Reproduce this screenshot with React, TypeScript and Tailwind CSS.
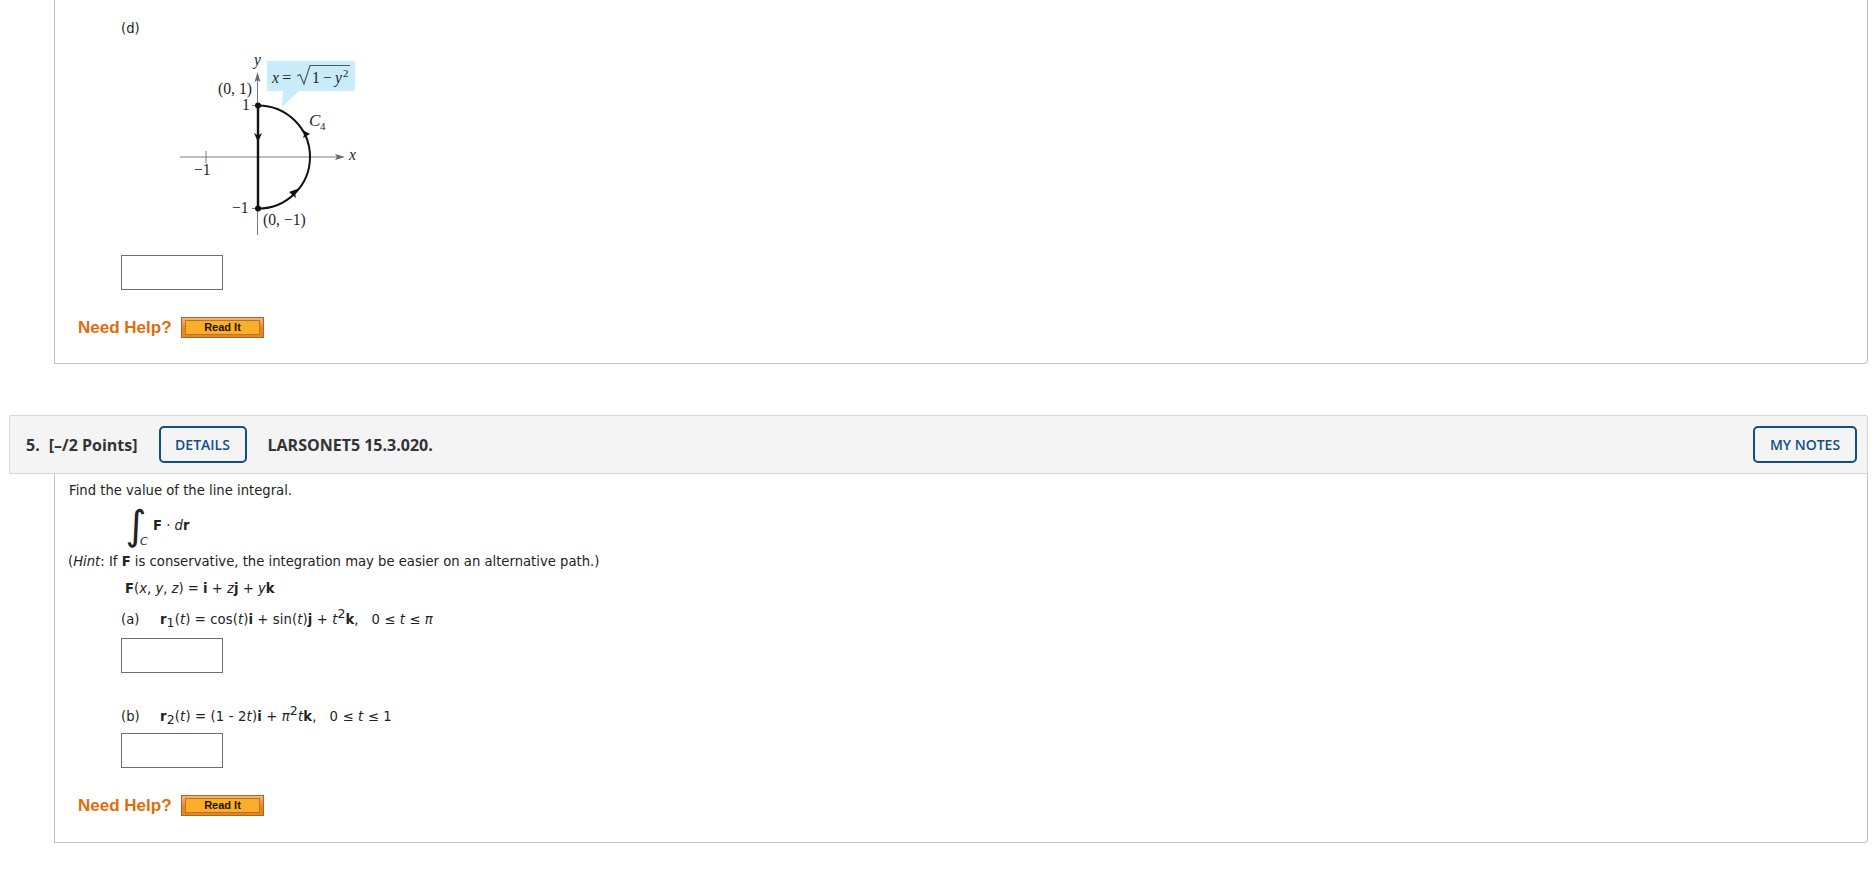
import React from "react";

const V = "font-['DejaVu_Sans','Verdana',sans-serif]";

function Box() {
  return <div className="w-[102px] h-[35px] border border-[#6e6e6e] bg-white" />;
}

function NeedHelp({ className = "" }: { className?: string }) {
  return (
    <div className={`flex items-center ${className}`}>
      <span className="font-['Liberation_Sans',sans-serif] font-bold text-[17px] leading-[21px] text-[#e36c09] w-[103px]">Need Help?</span>
      <div className="w-[83px] h-[21px] border border-[#a9652b] bg-gradient-to-b from-[#f8b678] via-[#f0851b] to-[#ee8318] p-[2px] pl-[3px] pr-[3px]">
        <div className="h-full border border-[#b5752e] bg-[#fbae2b] flex items-center justify-center font-['Liberation_Sans',sans-serif] font-bold text-[11px] text-[#1a1208]">Read It</div>
      </div>
    </div>
  );
}

function Graph() {
  return (
    <svg width="190" height="190" viewBox="175 50 190 190" className="block">
      <rect x="267" y="61" width="88" height="30" fill="#c9ecfb" />
      <polygon points="283,91 299,91 282,107" fill="#c9ecfb" />
      <line x1="180" y1="157" x2="340" y2="157" stroke="#7a7a7a" strokeWidth="1" />
      <polygon points="335,154 345,157 335,160 337,157" fill="#6a6a6a" />
      <line x1="257.5" y1="78" x2="257.5" y2="235" stroke="#7a7a7a" strokeWidth="1" />
      <polygon points="254.5,82 257.5,72 260.5,82 257.5,80" fill="#6a6a6a" />
      <line x1="206" y1="151" x2="206" y2="163" stroke="#7a7a7a" strokeWidth="1" />
      <line x1="252" y1="105.5" x2="258" y2="105.5" stroke="#7a7a7a" strokeWidth="1" />
      <line x1="252" y1="208.5" x2="258" y2="208.5" stroke="#7a7a7a" strokeWidth="1" />
      <path d="M258 105.5 A52 51.5 0 0 1 258 208.5" fill="none" stroke="#111" strokeWidth="2" />
      <line x1="258" y1="105.5" x2="258" y2="208.5" stroke="#111" strokeWidth="2.4" />
      <circle cx="258" cy="105.5" r="3" fill="#111" />
      <circle cx="258" cy="208.5" r="3" fill="#111" />
      <polygon points="254,133 258,142 262,133 258,135.5" fill="#111" />
      <polygon points="301,129 310,134 303,138 304.5,133.5" fill="#111" />
      <polygon points="300,188 289,192 296,198 295,193" fill="#111" />
      <g fontFamily="'Liberation Serif', serif" fontSize="15.7" fill="#2a2320">
        <text x="254" y="65" fontStyle="italic">y</text>
        <text x="349" y="160" fontStyle="italic">x</text>
        <text x="218" y="94">(0, 1)</text>
        <text x="242" y="110">1</text>
        <text x="194" y="175">−1</text>
        <text x="232" y="213">−1</text>
        <text x="263" y="225">(0, −1)</text>
        <text x="309" y="126" fontStyle="italic" fontSize="17">C</text>
        <text x="320" y="130" fontSize="11">4</text>
        <text x="272" y="83" fontStyle="italic">x</text>
        <text x="282" y="83" fontSize="16.5">=</text>
        <text x="312" y="83">1</text>
        <text x="323" y="83">−</text>
        <text x="335" y="83" fontStyle="italic">y</text>
        <text x="343" y="77" fontSize="11">2</text>
      </g>
      <path d="M297 76 L300 74.5 L304 84 L310 65.5 L350 65.5" fill="none" stroke="#4c5a60" strokeWidth="1.2" />
    </svg>
  );
}

export default function App() {
  return (
    <div className={`${V} w-[1874px] h-[872px] overflow-hidden bg-white text-[13.2px] text-[#222] pl-[9px] pr-[6px]`}>
      <div className="ml-[45px] h-[364px] border-x border-b border-[#c4c4c4] rounded-br-[4px] pl-[23px] relative">
        <div className="pl-[43px] pt-[21px] leading-[16px]">(d)</div>
        <div className="ml-[97px] mt-[13px]"><Graph /></div>
        <div className="pl-[43px] mt-[15px]"><Box /></div>
        <NeedHelp className="mt-[27px]" />
      </div>

      <div className="mt-[51px] h-[59px] border border-[#d6d6d6] bg-[#f4f4f4] rounded-t-[2px] flex items-center pl-[16px] pr-[10px] font-['Open_Sans',sans-serif] text-[#333]">
        <span className="font-bold text-[16px]">5.</span>
        <span className="font-bold text-[16px] ml-[9px]">[–/2 Points]</span>
        <button className="ml-[22px] w-[88px] h-[37px] border-2 border-[#0f5087] rounded-[5px] text-[#0f5087] font-semibold text-[14px] flex items-center justify-center pr-[2px]">DETAILS</button>
        <span className="font-bold text-[16px] ml-[20px]">LARSONET5 15.3.020.</span>
        <button className="ml-auto w-[104px] h-[37px] border-2 border-[#0f5087] rounded-[5px] text-[#0f5087] font-semibold text-[14px] flex items-center justify-center">MY NOTES</button>
      </div>

      <div className="ml-[45px] h-[370px] border-x border-b border-[#c4c4c4] rounded-br-[4px] pl-[23px] -mt-px">
        <div className="-ml-[9px] pt-[10px] leading-[16px]">Find the value of the line integral.</div>
        <div className="ml-[43px] mt-[8px] h-[40px] flex items-center relative">
          <span className="ml-[5px] mt-[-5px] font-['DejaVu_Sans',sans-serif] font-extralight italic text-[40px] leading-none w-[20px] flex justify-center">∫</span>
          <span className="italic text-[11px] leading-[12px] absolute left-[19px] top-[29px]">C</span>
          <span className="ml-[7px] mt-[-2px]"><b>F</b> · <i>d</i><b>r</b></span>
        </div>
        <div className="-ml-[10px] mt-[7px] leading-[16px]">(<i>Hint</i>: If <b>F</b> is conservative, the integration may be easier on an alternative path.)</div>
        <div className="ml-[47px] mt-[11px] leading-[16px]"><b>F</b>(<i>x</i>, <i>y</i>, <i>z</i>) = <b>i</b> + <i>z</i><b>j</b> + <i>y</i><b>k</b></div>
        <div className="ml-[43px] mt-[15px] leading-[16px] flex">
          <span className="w-[39px]">(a)</span>
          <span className="whitespace-pre tracking-[0.1px]"><b>r</b><sub className="text-[12.5px] leading-none">1</sub>(<i>t</i>) = cos(<i>t</i>)<b>i</b> + sin(<i>t</i>)<b>j</b> + <i>t</i><sup className="text-[12.5px] leading-none">2</sup><b>k</b>,   0 ≤ <i>t</i> ≤ <i>π</i></span>
        </div>
        <div className="pl-[43px] mt-[10px]"><Box /></div>
        <div className="ml-[43px] mt-[36px] leading-[16px] flex">
          <span className="w-[39px]">(b)</span>
          <span className="whitespace-pre tracking-[0.15px]"><b>r</b><sub className="text-[12.5px] leading-none">2</sub>(<i>t</i>) = (1 - 2<i>t</i>)<b>i</b> + <i>π</i><sup className="text-[12.5px] leading-none">2</sup><i>t</i><b>k</b>,   0 ≤ <i>t</i> ≤ 1</span>
        </div>
        <div className="pl-[43px] mt-[8px]"><Box /></div>
        <NeedHelp className="mt-[27px]" />
      </div>
    </div>
  );
}
